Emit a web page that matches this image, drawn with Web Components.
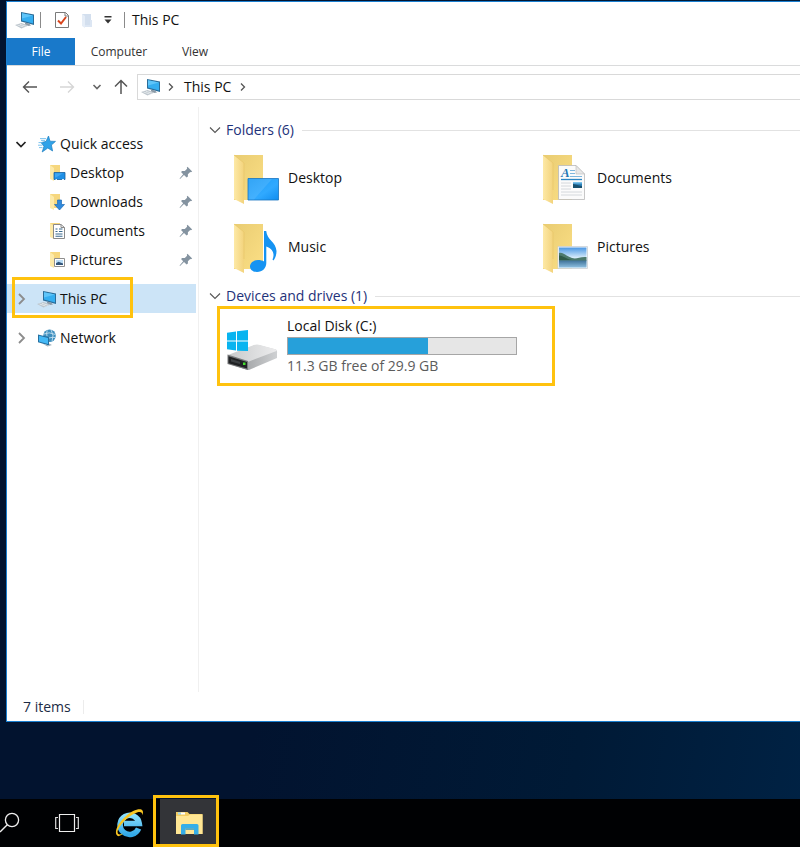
<!DOCTYPE html>
<html lang="en">
<head>
<meta charset="utf-8">
<meta name="viewport" content="width=device-width, initial-scale=1">
<title>This PC</title>
<style>
  html, body { margin: 0; height: 100%; }
  body { font: 14px/20px "Open Sans", "Noto Sans", sans-serif; color: #111; }
</style>
</head>
<body>
<desktop-screen>
  <explorer-window>
    <title-bar slot="title" heading="This PC"></title-bar>
    <ribbon-tabs slot="tabs"></ribbon-tabs>
    <address-bar slot="address" place="This PC"></address-bar>
    <nav-pane slot="nav">
      <nav-item icon="star" chevron="down">Quick access</nav-item>
      <nav-item icon="desktop-s" child>Desktop</nav-item>
      <nav-item icon="downloads-s" child>Downloads</nav-item>
      <nav-item icon="documents-s" child>Documents</nav-item>
      <nav-item icon="pictures-s" child>Pictures</nav-item>
      <nav-item icon="pc" chevron="right" top selected>This PC</nav-item>
      <nav-item icon="network" chevron="right" top>Network</nav-item>
    </nav-pane>
    <item-group label="Folders (6)" columns>
      <folder-tile icon="desktop">Desktop</folder-tile>
      <folder-tile icon="documents">Documents</folder-tile>
      <folder-tile icon="music">Music</folder-tile>
      <folder-tile icon="pictures">Pictures</folder-tile>
    </item-group>
    <item-group label="Devices and drives (1)">
      <drive-tile used="61.6" free="11.3 GB free of 29.9 GB">Local Disk (C:)</drive-tile>
    </item-group>
    <span slot="status">7 items</span>
  </explorer-window>
  <task-bar slot="taskbar"></task-bar>
</desktop-screen>

<script>
const folderBig = `
  <path d="M2 2H31V47H2Z" fill="url(#fb)"/>
  <path d="M2 2L12 10V51L2 46Z" fill="url(#ff)"/>
  <path d="M2 2L12 10V37" fill="none" stroke="#e5c467" stroke-width=".6"/>`;
const folderBigDefs = `<linearGradient id="fb" x1="0" y1="0" x2="1" y2="1"><stop offset="0" stop-color="#e9cc72"/><stop offset="1" stop-color="#fbdf85"/></linearGradient>
  <linearGradient id="ff" x1="0" y1="0" x2="1" y2="0"><stop offset="0" stop-color="#fde9a6"/><stop offset="1" stop-color="#f3d37c"/></linearGradient>`;
const folderSmall = `<path d="M2 1H12V15H2Z" fill="#f6d77e"/><path d="M2 1L6 4V17L2 15Z" fill="#fdeaa9"/>`;

const icons = {
  pc: [20, 18, `
    <path d="M6 1L19 3.5V14L6 10.4Z" fill="#2b6c98"/>
    <path d="M7 2.2L18 4.4V12.6L7 9.4Z" fill="#35aef0"/>
    <path d="M7 2.2L18 4.4L7 7.4Z" fill="#5fc5f9"/>
    <path d="M10 11.4L14 12.6L16 14.5L13 15L10 13.4Z" fill="#8b99a5"/>
    <path d="M0 14L6.500 12L13.500 14.600L6.500 17.400Z" fill="#bcc5cc"/>
    <path d="M2.500 14L8.500 16M4.800 13.200L10.800 15.200" stroke="#f3f6f8" stroke-width=".7"/>`],
  check: [16, 18, `
    <path d="M1.5 1.5H11.5L14.5 4.5V16.5H1.5Z" fill="#fff" stroke="#7a7a7a"/>
    <path d="M11 1.5V5H14.5" fill="none" stroke="#7a7a7a"/>
    <path d="M4 9.5L7 12.5L12 6" fill="none" stroke="#d8441c" stroke-width="2"/>`],
  newfolder: [12, 17, `<path d="M1 2H10V14H1Z" fill="#d3dfee"/><path d="M1 2L4 4V16L1 14Z" fill="#e5edf7"/><path d="M9 8H11V15H4V13H9Z" fill="#dce6f3"/>`],
  caret: [8, 10, `<path d="M0.5 1H7.5V2.4H0.5ZM0.5 4.5H7.5L4 8.5Z" fill="#333"/>`],
  back: [16, 14, `<path d="M15 7H1.5M7 1.5L1.5 7L7 12.5" fill="none" stroke="#555" stroke-width="1.4"/>`],
  forward: [16, 14, `<path d="M1 7H14.5M9 1.5L14.5 7L9 12.5" fill="none" stroke="#d6d6d6" stroke-width="1.4"/>`],
  up: [14, 16, `<path d="M7 15V1.5M1 7.5L7 1.5L13 7.5" fill="none" stroke="#555" stroke-width="1.5"/>`],
  down: [10, 10, `<path d="M1.500 3L5 6.500L8.500 3" fill="none" stroke="#666" stroke-width="1.6"/>`],
  "chevron-down": [12, 12, `<path d="M0.500 4L5 8.500L9.500 4" fill="none" stroke="#222" stroke-width="1.7"/>`],
  "chevron-right": [12, 12, `<path d="M3 1L8 6L3 11" fill="none" stroke="#8c8c8c" stroke-width="1.8"/>`],
  crumb: [6, 10, `<path d="M1 1.500L4.500 5L1 8.500" fill="none" stroke="#555" stroke-width="1.3"/>`],
  group: [12, 10, `<path d="M1 2.500L6 7.5L11 2.500" fill="none" stroke="#555" stroke-width="1.1"/>`],
  star: [18, 18, `
    <path d="M10.500 1L12 6.2L17.500 6.4L13.4 10L14.6 16L9.8 13L4.2 17L6 11.2L3 7.6L8 6.4Z" fill="#2fa2e8" stroke="#1c7cc0" stroke-width=".7"/>
    <path d="M2 3.6H8M3 5.4H7M0.500 7.600H4.500M0 10.2H4.500M1 12.6H4.500" stroke="#6dbcec" stroke-width=".9"/>`],
  "desktop-s": [18, 18, folderSmall + `<path d="M6 8.500H17V15.500H6Z" fill="#1e8fe6" stroke="#185f9e" stroke-width=".8"/><path d="M7 9.3H15L8 13.6H7Z" fill="#3ea6f2"/><path d="M7.500 15.500H9M14 15.500H16" stroke="#d8eefc"/>`],
  "downloads-s": [18, 18, folderSmall + `<path d="M9.5 7H13.5V11.5H16.5L11.5 17L6.5 11.5H9.5Z" fill="#2f8ade" stroke="#1e6bb5" stroke-width=".7"/>`],
  "documents-s": [18, 18, folderSmall + `<path d="M5.5 2.5H13L16.5 5.5V16.5H5.5Z" fill="#fff" stroke="#8a8a8a"/><path d="M13 2.5V5.5H16.5" fill="none" stroke="#8a8a8a"/><path d="M7.5 7H9.5M11 7H14.5M7.5 9.5H9.5M11 9.5H14.5M7.5 12H14.5M7.5 14.2H14.5" stroke="#3b6a8e" stroke-width="1.1"/>`],
  "pictures-s": [18, 18, folderSmall + `<path d="M6.5 7.5H16.5V15.5H6.5Z" fill="#fff" stroke="#8f8f8f"/><path d="M8 9H15V14H8Z" fill="#b9dcf5"/><path d="M8 12.2L10.5 10.8L15 12.4V14H8Z" fill="#34567a"/>`],
  network: [18, 18, `
    <circle cx="11.500" cy="6.700" r="6.3" fill="#3f8fbe"/>
    <path d="M6 5Q11 2.500 17 5.400M9.300 1.500Q8 4 9 7M13 .8Q16.500 6 14 12.500M11 9Q14 8 17.500 8.500" fill="none" stroke="#c5e0ef" stroke-width=".9"/>
    <path d="M0 5.500L11 8.200V16.400L0 13.2Z" fill="#256f9f"/>
    <path d="M1 6.800L10 9V15L1 12.4Z" fill="#45b9f6"/>
    <path d="M5 15L9.500 17.500L14 16L11 14.500V16.400Z" fill="#9fb0bb"/>`],
  pin: [14, 14, `<path d="M8.5 0.8L13.2 5.4L11.9 6.2L11.2 5.9L8.9 8.3V10.6L7.6 11.6L5 9L1 13L0.6 12.6L4.2 8.2L2 6L3.2 4.9L5.8 5L8.1 2.7L7.8 1.7Z" fill="#8493a0"/>`],
  desktop: [50, 54, folderBig + `<path d="M16 25.500H46.500V47H16Z" fill="url(#dk)" stroke="#1674c0" stroke-width=".8"/><path d="M16.5 26H40L22 46.5H16.5Z" fill="#fff" opacity=".1"/>`,
    `<linearGradient id="dk" x1="0" y1="0" x2="1" y2="1"><stop offset="0" stop-color="#1c9bf5"/><stop offset=".6" stop-color="#30a9ff"/><stop offset="1" stop-color="#0f8df0"/></linearGradient>`],
  music: [50, 54, folderBig + `<path d="M32 9H34.2C35 18 44 20 44.5 29C44.6 33 43 36.500 41.500 38.500L40.500 37.500C43 32 41 27 34.300 24.500V41C34.300 46 30.500 50 25 50C21 50 18 47.800 18 44.500C18 41 21.500 38 26 38C28.500 38 30.500 38.500 32 39.500Z" fill="#1593f2"/>`],
  documents: [50, 54, folderBig + `
    <path d="M17.500 12.500H35L43.500 21V46.500H17.500Z" fill="#fbfbfb" stroke="#b9b9b9" stroke-width=".8"/>
    <path d="M35 12.500V21H43.500Z" fill="#e7e7e7" stroke="#b9b9b9" stroke-width=".6"/>
    <text x="20" y="24" font-family="Liberation Serif, serif" font-style="italic" font-weight="700" font-size="13" fill="#2478b5">A</text>
    <path d="M29 17.500H34M29 20.500H34M29 23.500H41" stroke="#7fb7dd"/>
    <path d="M20 26.500H41" stroke="#2c86c4" stroke-width="1.300"/>
    <path d="M20 30H30M20 33H30M20 36H30M20 39H41M20 42H41" stroke="#d4d8dc"/>
    <path d="M32 29H41V35H32Z" fill="#2f83bb"/><path d="M32 31L41 33V35H32Z" fill="#17506f"/><path d="M32 29H41V30.500H32Z" fill="#7cc2ea"/>`],
  pictures: [50, 54, folderBig + `
    <path d="M17 24.500H46.500V46.500H17Z" fill="#fff" stroke="#c9cfd4" stroke-width=".8"/>
    <path d="M18 25.500H45.500V45.500H18Z" fill="url(#sky)"/>
    <path d="M18 31C22 30 25 34 31 36C36 37.500 38 34.500 45.500 35V39H18Z" fill="#4d7a6c"/>
    <path d="M18 33.500C23 34 25 37 31 38H18Z" fill="#2f5a48"/>
    <path d="M18 38.500H45.500V45.500H18Z" fill="url(#sea)"/>`,
    `<linearGradient id="sky" x1="0" y1="0" x2="0" y2="1"><stop offset="0" stop-color="#4a97e4"/><stop offset=".5" stop-color="#d5eafa"/></linearGradient>
     <linearGradient id="sea" x1="0" y1="0" x2="0" y2="1"><stop offset="0" stop-color="#3f7299"/><stop offset="1" stop-color="#8dbfe0"/></linearGradient>`],
  drive: [52, 42, `
    <path d="M3 26L28 15.500Q31 14.500 34 15.500L50 19.500Q51.500 21 51 23V28L24 39.500Q22 40.500 20 39.500L3 34Z" fill="url(#side)"/>
    <path d="M2 25L28 15Q31 14 34 15L50 19.500L50.500 21L23 31.500Q21 32 19 31.500Z" fill="url(#lid)"/>
    <path d="M1.500 24.500L22 31V40L1.500 34Z" fill="#77797b"/>
    <path d="M2.500 26.300L21 32V38.500L2.500 33.200Z" fill="#202224"/>
    <path d="M5 29L14 31.700V34L5 31.400Z" fill="#3d4144"/>
    <path d="M17 32.500H19.500V35H17Z" fill="#45e12e"/>
    <path d="M1 2.800L10 1.400V10.600H1ZM11 1.200L22 0V10.600H11ZM1 11.600H10V20.600L1 19.300ZM11 11.600H22V21L11 20.700Z" fill="#08b4f0"/>`,
    `<linearGradient id="lid"><stop offset="0" stop-color="#c8cacb"/><stop offset="1" stop-color="#ececed"/></linearGradient>
     <linearGradient id="side"><stop offset=".3" stop-color="#a2a4a6"/><stop offset="1" stop-color="#cfd1d3"/></linearGradient>`],
  search: [20, 22, `<circle cx="12" cy="8" r="6.600" fill="none" stroke="#eee" stroke-width="1.300"/><path d="M7.300 12.700L0 20" stroke="#eee" stroke-width="1.400"/>`],
  taskview: [24, 20, `<path d="M4.500 1.500H19.500V18.500H4.500Z" fill="none" stroke="#eee" stroke-width="1.200"/><path d="M3 4.500H.7V15.500H3M21 4.500H23.300V15.500H21" fill="none" stroke="#ddd" stroke-width="1.200"/>`],
  ie: [30, 30, `
    <path d="M24.600 20.500A9.600 9.600 0 1 1 25.200 15.500H10" fill="none" stroke="url(#eb)" stroke-width="5.600"/>
    <path d="M3.800 28C-1 25 4 15 12 8C18 2.600 26.500-.5 28.500 2.500C29.500 4 28.800 6 28.300 7.200C28.400 4.500 27 3.200 23 4.400C14 7.300 3 19.500 3.600 24.500C3.900 27 6.500 26.700 9 25.600C7.300 27.200 5.300 28.600 3.800 28Z" fill="#f9c623"/>`,
    `<linearGradient id="eb" x1="0" y1="0" x2="0" y2="1"><stop offset="0" stop-color="#8be0fd"/><stop offset="1" stop-color="#33a9e8"/></linearGradient>`],
  explorer: [28, 26, `
    <path d="M1 2H12.500L14.500 4H27.500V24H1Z" fill="#f3cd63"/>
    <path d="M3 2.500H6V4.500H3Z" fill="#9fd8f5"/><path d="M6 2.500H10V4.500H6Z" fill="#fff"/>
    <path d="M1 6H13L15 4.500H27.500V24H1Z" fill="#ffe694"/>
    <path d="M6 24.500V15.500Q6 14 7.500 14H22Q23.500 14 23.500 15.500V24.500H19V18.500H10.500V24.500Z" fill="#35aee8"/>
    <path d="M10.500 18.500H19V19.700H10.500Z" fill="#1c8fca"/>`],
};

const sheet = `:host,*{box-sizing:border-box}
button{font:inherit;color:inherit;background:none;border:0;padding:0;margin:0;text-align:left;cursor:default}`;

function define(name, css, html) {
  customElements.define(name, class extends HTMLElement {
    constructor() {
      super();
      const t = document.createElement("template");
      t.innerHTML = `<style>${sheet}${css}</style>${typeof html === "function" ? html(this) : html}`;
      this.attachShadow({ mode: "open" }).append(t.content.cloneNode(true));
    }
  });
}
const attr = (el, name) => el.getAttribute(name) || "";

define("win-icon", `:host{display:block;flex:none}svg{display:block}`, el => {
  const [w, h, body, defs = ""] = icons[attr(el, "name")];
  return `<svg width="${w}" height="${h}" viewBox="0 0 ${w} ${h}" aria-hidden="true"><defs>${w === 50 ? folderBigDefs : ""}${defs}</defs>${body}</svg>`;
});

/* Amber frame that calls attention to the control it surrounds. */
define("mark-frame", `:host{position:absolute;inset:0;border:3px solid #ffc20e;pointer-events:none;z-index:1}`, "");

define("title-bar", `
  :host{display:flex;align-items:center;height:36px;padding-left:8px}
  i{width:1px;height:16px;background:#8a8a8a}
  .a{margin:0 13px 0 5px}.b{margin:0 7px 0 12px}
  .gap{margin-left:11px}
  h1{font:inherit;margin:0}`, el => `
  <win-icon name="pc"></win-icon><i class="a"></i>
  <button aria-label="Properties"><win-icon name="check"></win-icon></button>
  <button class="gap" aria-label="New folder"><win-icon name="newfolder"></win-icon></button>
  <button class="gap" aria-label="Customize toolbar"><win-icon name="caret"></win-icon></button>
  <i class="b"></i><h1>${attr(el, "heading")}</h1>`);

define("ribbon-tabs", `
  :host{display:flex;height:28px;font-size:12px;border-bottom:1px solid #dadbdc;color:#333}
  button{text-align:center;width:64px}
  .file{width:68px;background:#1979ca;color:#fff}
  .wide{width:88px}`,
  `<button class="file">File</button><button class="wide">Computer</button><button>View</button>`);

define("address-bar", `
  :host{display:flex;align-items:center;height:41px;padding-left:15px}
  .f{margin-left:21px}.d{margin-left:17px}.u{margin-left:12px}
  nav{flex:1;display:flex;align-items:center;height:26px;margin-left:9px;padding-left:3px;border:1px solid #d9d9d9;border-right:0}
  .c{margin-left:7px}.t{margin:0 9px 0 10px}`, el => `
  <button aria-label="Back"><win-icon name="back"></win-icon></button>
  <button class="f" aria-label="Forward" disabled><win-icon name="forward"></win-icon></button>
  <button class="d" aria-label="Recent locations"><win-icon name="down"></win-icon></button>
  <button class="u" aria-label="Up"><win-icon name="up"></win-icon></button>
  <nav aria-label="Address"><win-icon name="pc"></win-icon>
    <win-icon class="c" name="crumb"></win-icon><button class="t">${attr(el, "place")}</button><win-icon name="crumb"></win-icon></nav>`);

define("nav-pane", `:host{display:block;width:192px;flex:none;padding:22px 2px 0 0;border-right:1px solid #f0f0f0}`, `<slot></slot>`);

define("nav-item", `
  :host{display:block;position:relative}
  :host([top]){margin-top:10px}
  :host([selected]){background:#cce4f7}
  button{display:flex;align-items:center;width:100%;height:29px;padding:0 3px 0 9px}
  :host([child]) button{padding-left:41px}
  .i{display:flex;justify-content:center;width:18px;margin:0 4px 0 10px}
  :host([child]) .i{margin-left:0}
  .t{flex:1}
  mark-frame{inset:-7px auto -5px 5px;width:121px}`, el => `
  <button>${el.hasAttribute("child") ? "" : `<win-icon name="chevron-${attr(el, "chevron")}"></win-icon>`}
  <span class="i"><win-icon name="${attr(el, "icon")}"></win-icon></span><span class="t"><slot></slot></span>
  ${el.hasAttribute("child") ? `<win-icon name="pin"></win-icon>` : ""}</button>
  ${el.hasAttribute("selected") ? "<mark-frame></mark-frame>" : ""}`);

define("item-group", `
  :host{display:block}
  h2{display:flex;align-items:center;margin:0;font:inherit;color:#1e327a}
  h2::after{content:"";flex:1;height:1px;background:#e2e2e2;margin-left:8px}
  button{display:flex;align-items:center;gap:5px;height:20px}
  :host([columns]) .items{display:grid;grid-template-columns:309px 1fr;padding:3px 0 5px 23px}
  :host(:not([columns])) .items{padding-left:8px}`, el => `
  <h2><button aria-expanded="true"><win-icon name="group"></win-icon>${attr(el, "label")}</button></h2>
  <div class="items"><slot></slot></div>`);

define("folder-tile", `:host{display:block}
  button{display:flex;align-items:center;gap:6px;width:100%;height:69px}
  win-icon{padding-top:4px}`, el =>
  `<button><win-icon name="${attr(el, "icon")}"></win-icon><span><slot></slot></span></button>`);

define("drive-tile", `
  :host{display:block;position:relative;width:338px;max-width:100%}
  button{display:flex;align-items:center;gap:9px;width:100%;height:80px;padding-left:9px}
  win-icon{margin-top:10px}
  .d{display:flex;flex-direction:column;width:230px}
  progress{appearance:none;display:block;width:100%;height:18px;border:1px solid #a6a6a6;background:#e6e6e6;margin:1px 0}
  progress::-webkit-progress-bar{background:#e6e6e6}
  progress::-webkit-progress-value{background:#26a0da}
  .f{color:#5c5c5c}`, el => `
  <button><win-icon name="drive"></win-icon><span class="d"><span><slot></slot></span>
  <progress max="100" value="${attr(el, "used")}" aria-label="Space used"></progress>
  <span class="f">${attr(el, "free")}</span></span></button><mark-frame></mark-frame>`);

define("explorer-window", `
  :host{display:flex;flex-direction:column;background:#fff;border:1px solid #1a7fd0;border-right:0}
  .body{flex:1;display:flex}
  main{flex:1;min-width:0;padding:13px 0 0 10px}
  footer{display:flex;align-items:center;height:29px;padding-left:16px;color:#1c2b45}
  footer::after{content:"";width:1px;height:14px;background:#ececec;margin-left:12px}`, `
  <slot name="title"></slot><slot name="tabs"></slot><slot name="address"></slot>
  <div class="body"><slot name="nav"></slot><main><slot></slot></main></div>
  <footer><slot name="status"></slot></footer>`);

define("task-bar", `
  :host{display:flex;height:48px;background:#000103}
  button{display:flex;align-items:center;justify-content:center}
  .s{width:39px;justify-content:flex-start}.v{width:56px}.i{width:65px;padding-left:3px}
  .e{position:relative;width:57px;background:#333438}
  mark-frame{inset:-4px -2px 0 -7px}`, `
  <button class="s" aria-label="Search"><win-icon name="search"></win-icon></button>
  <button class="v" aria-label="Task view"><win-icon name="taskview"></win-icon></button>
  <button class="i" aria-label="Internet Explorer"><win-icon name="ie"></win-icon></button>
  <button class="e" aria-label="File Explorer"><win-icon name="explorer"></win-icon><mark-frame></mark-frame></button>`);

define("desktop-screen", `
  :host{display:flex;flex-direction:column;min-height:100vh;background:linear-gradient(100deg,#02132f 0%,#02132f 40%,#001a36 75%,#002244 100%)}
  .area{flex:1;display:flex;padding:1px 0 77px 6px}
  ::slotted(explorer-window){flex:1;min-width:0}`, `
  <div class="area"><slot></slot></div><slot name="taskbar"></slot>`);
</script>
</body>
</html>
